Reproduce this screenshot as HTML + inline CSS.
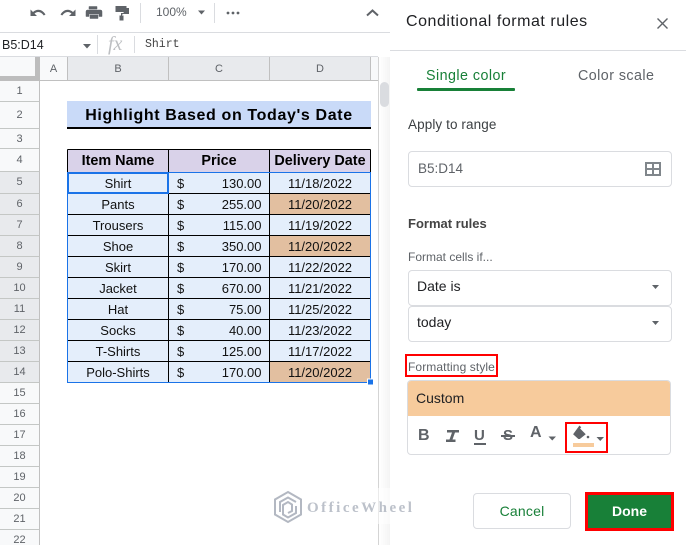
<!DOCTYPE html>
<html><head><meta charset="utf-8"><style>
html,body{margin:0;padding:0;background:#fff}
#p{position:relative;width:686px;height:545px;overflow:hidden;background:#fff;font-family:"Liberation Sans",sans-serif;color:#000}
#p div,#p span.a{position:absolute;box-sizing:border-box;white-space:nowrap}
.rh{left:0;width:40px;background:#f8f9fa;border-bottom:1px solid #c4c7c5;border-right:1px solid #c0c0c0;text-align:center;color:#5f6368;font-size:11px}
.rs{background:#e8eaed}
.ch{top:57px;height:24px;background:#e8eaed;border-right:1px solid #c0c0c0;border-bottom:1px solid #c0c0c0;text-align:center;color:#5f6368;font-size:11px;line-height:24px}
.c{font-size:13px;text-align:center;color:#111;height:21px;line-height:21px}
.m{font-size:10.5px;color:#5f6368}
.h{font-weight:bold;font-size:14.4px;color:#000;text-align:center;height:22px;line-height:22px;background:#d9d2e9}
.bx{border:1px solid #dadce0;border-radius:4px;background:#fff}
.t{color:#3c4043}
svg{position:absolute;overflow:visible}
</style></head><body><div id="p">

<!-- toolbar -->
<svg style="left:0;top:0" width="390" height="33" viewBox="0 0 390 33">
<path d="M30.5 13.500 L30.500 9.500 L33 12 C37 8.500 42 9 45.500 14.500 L43.800 15.500 C41 11.500 37.500 11 34.500 13.500 L37 16 L30.500 16Z" fill="#5f6368"/>
<path d="M75.500 13.500 L75.500 9.500 L73 12 C69 8.500 64 9 60.500 14.500 L62.200 15.500 C65 11.500 68.500 11 71.500 13.500 L69 16 L75.500 16Z" fill="#5f6368"/>
<path d="M89 6.500h8v2.500H89zM87.500 10h13a1.500 1.500 0 0 1 1.500 1.500V16.500H99V14H89v2.500H86V11.500A1.500 1.500 0 0 1 87.500 10zM90 15h8v3.500h-8z" fill="#5f6368" stroke="#5f6368" stroke-width=".5"/>
<path d="M116 6.500h10v5h-10zM126 8.500h2.500v5h-7v2.500M120 16h3v4h-3z" fill="#5f6368" stroke="#5f6368" stroke-width="1"/>
<rect x="140" y="3" width="1" height="20" fill="#dadce0"/>
<rect x="214" y="3" width="1" height="20" fill="#dadce0"/>
<path d="M198 10.500h7l-3.500 4z" fill="#5f6368"/>
<circle cx="228" cy="13" r="1.400" fill="#5f6368"/><circle cx="233" cy="13" r="1.400" fill="#5f6368"/><circle cx="238" cy="13" r="1.400" fill="#5f6368"/>
<path d="M367 15.500l5.500-5 5.500 5" fill="none" stroke="#5f6368" stroke-width="2"/>
</svg>
<div style="left:156px;top:4px;font-size:12px;color:#5f6368;line-height:16px">100%</div>

<!-- formula bar -->
<div style="left:0;top:32px;width:390px;height:1px;background:#dadce0"></div>
<div style="left:0;top:56px;width:378px;height:1px;background:#dadce0"></div>
<div style="left:2px;top:37px;font-size:12.500px;color:#1f2124;line-height:16px">B5:D14</div>
<svg style="left:0;top:33px" width="150" height="24"><path d="M83 11h8l-4 4.500z" fill="#5f6368"/><rect x="97" y="2" width="1" height="19" fill="#dadce0"/><rect x="134" y="3" width="1" height="17" fill="#dadce0"/></svg>
<div style="left:108px;top:33px;font-family:'Liberation Serif',serif;font-style:italic;font-size:20px;color:#bdbfc2;line-height:23px">fx</div>
<div style="left:145px;top:37px;font-family:'Liberation Mono',monospace;font-size:11.500px;color:#444;line-height:16px">Shirt</div>

<!-- headers -->
<div style="left:0;top:57px;width:40px;height:24px;background:#f8f9fa;border-right:1px solid #c0c0c0"></div>
<div style="left:0;top:76px;width:40px;height:5px;background:#bdbdbd"></div>
<div style="left:35px;top:57px;width:5px;height:24px;background:#bdbdbd"></div>
<div class="ch" style="left:40px;width:28px;background:#f8f9fa">A</div>
<div class="ch" style="left:68px;width:101px">B</div>
<div class="ch" style="left:169px;width:101px">C</div>
<div class="ch" style="left:270px;width:101px">D</div>
<div class="ch" style="left:371px;width:8px;background:#f8f9fa"></div>

<!-- row headers -->
<div class="rh" style="top:81px;height:21px;line-height:21px">1</div>
<div class="rh" style="top:102px;height:27px;line-height:26px">2</div>
<div class="rh" style="top:129px;height:20px;line-height:21px">3</div>
<div class="rh" style="top:149px;height:23px;line-height:23px">4</div>
<div class="rh rs" style="top:172px;height:22px;line-height:21px">5</div>
<div class="rh rs" style="top:194px;height:21px;line-height:20px">6</div>
<div class="rh rs" style="top:215px;height:21px;line-height:20px">7</div>
<div class="rh rs" style="top:236px;height:21px;line-height:20px">8</div>
<div class="rh rs" style="top:257px;height:21px;line-height:20px">9</div>
<div class="rh rs" style="top:278px;height:21px;line-height:20px">10</div>
<div class="rh rs" style="top:299px;height:21px;line-height:20px">11</div>
<div class="rh rs" style="top:320px;height:21px;line-height:20px">12</div>
<div class="rh rs" style="top:341px;height:21px;line-height:20px">13</div>
<div class="rh rs" style="top:362px;height:21px;line-height:20px">14</div>
<div class="rh" style="top:383px;height:21px;line-height:20px">15</div>
<div class="rh" style="top:404px;height:21px;line-height:20px">16</div>
<div class="rh" style="top:425px;height:21px;line-height:20px">17</div>
<div class="rh" style="top:446px;height:21px;line-height:20px">18</div>
<div class="rh" style="top:467px;height:21px;line-height:20px">19</div>
<div class="rh" style="top:488px;height:21px;line-height:20px">20</div>
<div class="rh" style="top:509px;height:21px;line-height:20px">21</div>
<div class="rh" style="top:530px;height:21px;line-height:20px">22</div>

<!-- title -->
<div style="left:67px;top:101px;width:304px;height:28px;background:#c9daf8;border-bottom:2px solid #000;text-align:center;font-weight:bold;font-size:16px;line-height:29px;letter-spacing:.63px">Highlight Based on Today's Date</div>

<!-- table fills -->
<div style="left:67px;top:172px;width:304px;height:211px;background:#e4eefb"></div>
<div style="left:270px;top:194px;width:100px;height:20px;background:#e2bfa0"></div>
<div style="left:270px;top:236px;width:100px;height:20px;background:#e2bfa0"></div>
<div style="left:270px;top:362px;width:100px;height:20px;background:#e2bfa0"></div>

<!-- header row -->
<div class="h" style="left:68px;top:150px;width:100px">Item Name</div>
<div class="h" style="left:169px;top:150px;width:100px">Price</div>
<div class="h" style="left:270px;top:150px;width:100px">Delivery Date</div>

<!-- table lines -->
<svg style="left:0;top:0" width="390" height="400" shape-rendering="crispEdges">
<g stroke="#000" stroke-width="1">
<path d="M67.500 149.500H370.500M67.500 193.500H370.500M67.500 214.500H370.500M67.500 235.500H370.500M67.500 256.500H370.500M67.500 277.500H370.500M67.500 298.500H370.500M67.500 319.500H370.500M67.500 340.500H370.500M67.500 361.500H370.500"/>
<path d="M67.500 149.500V172M168.500 149.500V382M269.500 149.500V382M370.500 149.500V172"/>
</g>
<rect x="67.500" y="172.500" width="303" height="210" fill="none" stroke="#1a73e8" stroke-width="1"/>
<rect x="68" y="173" width="100" height="20" fill="none" stroke="#1a73e8" stroke-width="2"/>
<rect x="367.500" y="379" width="6" height="6" fill="#1a73e8" stroke="#fff" stroke-width="1"/>
</svg>

<!-- rows -->
<div class="c" style="left:68px;width:100px;top:173px">Shirt</div>
<div class="c" style="left:68px;width:100px;top:194px">Pants</div>
<div class="c" style="left:68px;width:100px;top:215px">Trousers</div>
<div class="c" style="left:68px;width:100px;top:236px">Shoe</div>
<div class="c" style="left:68px;width:100px;top:257px">Skirt</div>
<div class="c" style="left:68px;width:100px;top:278px">Jacket</div>
<div class="c" style="left:68px;width:100px;top:299px">Hat</div>
<div class="c" style="left:68px;width:100px;top:320px">Socks</div>
<div class="c" style="left:68px;width:100px;top:341px">T-Shirts</div>
<div class="c" style="left:68px;width:100px;top:362px">Polo-Shirts</div>

<div class="c" style="left:177px;top:173px">$</div>
<div class="c" style="left:177px;top:194px">$</div>
<div class="c" style="left:177px;top:215px">$</div>
<div class="c" style="left:177px;top:236px">$</div>
<div class="c" style="left:177px;top:257px">$</div>
<div class="c" style="left:177px;top:278px">$</div>
<div class="c" style="left:177px;top:299px">$</div>
<div class="c" style="left:177px;top:320px">$</div>
<div class="c" style="left:177px;top:341px">$</div>
<div class="c" style="left:177px;top:362px">$</div>

<div class="c" style="left:200px;width:61.500px;text-align:right;top:173px">130.00</div>
<div class="c" style="left:200px;width:61.500px;text-align:right;top:194px">255.00</div>
<div class="c" style="left:200px;width:61.500px;text-align:right;top:215px">115.00</div>
<div class="c" style="left:200px;width:61.500px;text-align:right;top:236px">350.00</div>
<div class="c" style="left:200px;width:61.500px;text-align:right;top:257px">170.00</div>
<div class="c" style="left:200px;width:61.500px;text-align:right;top:278px">670.00</div>
<div class="c" style="left:200px;width:61.500px;text-align:right;top:299px">75.00</div>
<div class="c" style="left:200px;width:61.500px;text-align:right;top:320px">40.00</div>
<div class="c" style="left:200px;width:61.500px;text-align:right;top:341px">125.00</div>
<div class="c" style="left:200px;width:61.500px;text-align:right;top:362px">170.00</div>

<div class="c" style="left:270px;width:100px;top:173px">11/18/2022</div>
<div class="c" style="left:270px;width:100px;top:194px">11/20/2022</div>
<div class="c" style="left:270px;width:100px;top:215px">11/19/2022</div>
<div class="c" style="left:270px;width:100px;top:236px">11/20/2022</div>
<div class="c" style="left:270px;width:100px;top:257px">11/22/2022</div>
<div class="c" style="left:270px;width:100px;top:278px">11/21/2022</div>
<div class="c" style="left:270px;width:100px;top:299px">11/25/2022</div>
<div class="c" style="left:270px;width:100px;top:320px">11/23/2022</div>
<div class="c" style="left:270px;width:100px;top:341px">11/17/2022</div>
<div class="c" style="left:270px;width:100px;top:362px">11/20/2022</div>

<!-- scrollbar -->
<div style="left:378px;top:57px;width:1px;height:488px;background:#d4d4d4"></div>
<div style="left:379px;top:57px;width:11px;height:488px;background:linear-gradient(90deg,#fff,#f4f4f4)"></div>
<div style="left:380px;top:82px;width:9px;height:25px;background:#dadce0;border-radius:5px"></div>

<!-- panel -->
<div style="left:390px;top:0;width:296px;height:545px;background:#fff"></div>
<div style="left:406px;top:12px;font-size:16px;color:#202124;line-height:20px;letter-spacing:.53px">Conditional format rules</div>
<svg style="left:657px;top:18px" width="11" height="11"><path d="M.5 .5l10 10M10.500 .5l-10 10" stroke="#5f6368" stroke-width="1.400" fill="none"/></svg>
<div style="left:390px;top:50px;width:296px;height:1px;background:#dadce0"></div>
<div style="left:426px;top:67px;font-size:14.300px;color:#188038;line-height:18px;letter-spacing:.45px">Single color</div>
<div style="left:578px;top:67px;font-size:14.300px;color:#5f6368;line-height:18px;letter-spacing:.45px">Color scale</div>
<div style="left:417px;top:88px;width:98px;height:3px;background:#188038;border-radius:1px"></div>
<div class="t" style="left:408px;top:116px;font-size:13.500px;line-height:17px;letter-spacing:.1px">Apply to range</div>
<div class="bx" style="left:408px;top:151px;width:264px;height:36px"></div>
<div style="left:418px;top:161px;font-size:13.500px;color:#5f6368;line-height:16px">B5:D14</div>
<svg style="left:645px;top:162px" width="16" height="14"><path d="M1 1h14v12H1zM8 1v12M1 7h14" fill="none" stroke="#80868b" stroke-width="2"/></svg>
<div class="t" style="left:408px;top:215px;font-size:13px;font-weight:bold;line-height:17px;color:#444">Format rules</div>
<div style="left:408px;top:250px;font-size:12px;color:#5f6368;line-height:15px">Format cells if...</div>
<div class="bx" style="left:408px;top:270px;width:264px;height:36px"></div>
<div class="bx" style="left:408px;top:306px;width:264px;height:36px"></div>
<div style="left:417px;top:278px;font-size:14px;color:#202124;line-height:17px">Date is</div>
<div style="left:417px;top:314px;font-size:14px;color:#202124;line-height:17px">today</div>
<svg style="left:651px;top:284px" width="12" height="44"><path d="M1 1h7l-3.500 4zM1 37h7l-3.500 4z" fill="#5f6368"/></svg>
<div style="left:405px;top:354px;width:93px;height:23px;border:2px solid #f00"></div>
<div style="left:408px;top:360px;font-size:12px;color:#5f6368;line-height:15px;letter-spacing:.1px">Formatting style</div>
<div class="bx" style="left:407px;top:380px;width:264px;height:75px"></div>
<div style="left:408px;top:381px;width:262px;height:35px;background:#f7cb9c;border-radius:3px 3px 0 0"></div>
<div style="left:416px;top:390px;font-size:14px;color:#202124;line-height:17px">Custom</div>
<div style="left:418px;top:426px;font-size:16px;font-weight:bold;color:#5f6368;line-height:20px">B</div>
<svg style="left:446px;top:430px" width="13" height="12"><path d="M1 0h12v2.500H9L6.500 9.500H9.500V12H0V9.500H3.500L6 2.500H1z" fill="#5f6368"/></svg>
<div style="left:474px;top:426px;font-size:15px;font-weight:bold;color:#5f6368;line-height:20px">U</div>
<div style="left:474px;top:443px;width:12px;height:2px;background:#5f6368"></div>
<div style="left:503px;top:426px;font-size:15px;font-weight:bold;color:#5f6368;line-height:20px">S</div>
<div style="left:501px;top:435px;width:14px;height:1.500px;background:#5f6368"></div>
<div style="left:530px;top:423px;font-size:16px;font-weight:bold;color:#5f6368;line-height:20px">A</div>
<svg style="left:548px;top:436px" width="9" height="5"><path d="M.5 .5h7.500l-3.750 4z" fill="#5f6368"/></svg>
<div style="left:565px;top:422px;width:43px;height:31px;border:2px solid #f00"></div>
<svg style="left:573px;top:425px" width="30" height="24">
<path d="M6.500 1l1.300 1.300-1.200 1.200 5.700 5.700-5.600 4.500H5.500L.5 9.200zM9.500 9H2.500" fill="#5f6368" stroke="#5f6368" stroke-width=".6"/>
<circle cx="15" cy="12" r="1.300" fill="#5f6368"/>
<path d="M23.500 12h7.500l-3.750 4z" fill="#5f6368"/>
<rect x="0" y="18" width="21" height="4" fill="#f7cb9c"/>
</svg>
<div class="bx" style="left:473px;top:493px;width:98px;height:36px;border-color:#dadce0;text-align:center;font-size:14px;line-height:34px;color:#188038;letter-spacing:.2px">Cancel</div>
<div style="left:585px;top:492px;width:89px;height:39px;background:#188038;border:3px solid #f00;text-align:center;font-size:14px;font-weight:bold;line-height:33px;color:#fff">Done</div>

<!-- watermark -->
<div style="left:269px;top:488px;width:145px;height:36px;background:rgba(255,255,255,.5)"></div>
<svg style="left:273px;top:490px" width="30" height="34" viewBox="0 0 30 34">
<g fill="none" stroke="#b3b8c2" stroke-width="2">
<path d="M15 2L28 9.500V24.500L15 32L2 24.500V9.500Z"/>
<path d="M7 22V12L15 7.500L23 12M23 16V23L15 27.500L10 24.500V15L15 12L19 14.500V21L15 23"/>
</g></svg>
<div style="left:307px;top:499px;font-family:'Liberation Serif',serif;font-size:15px;font-weight:bold;color:#bcc1ca;letter-spacing:2.500px;line-height:18px">OfficeWheel</div>
</div></body></html>
